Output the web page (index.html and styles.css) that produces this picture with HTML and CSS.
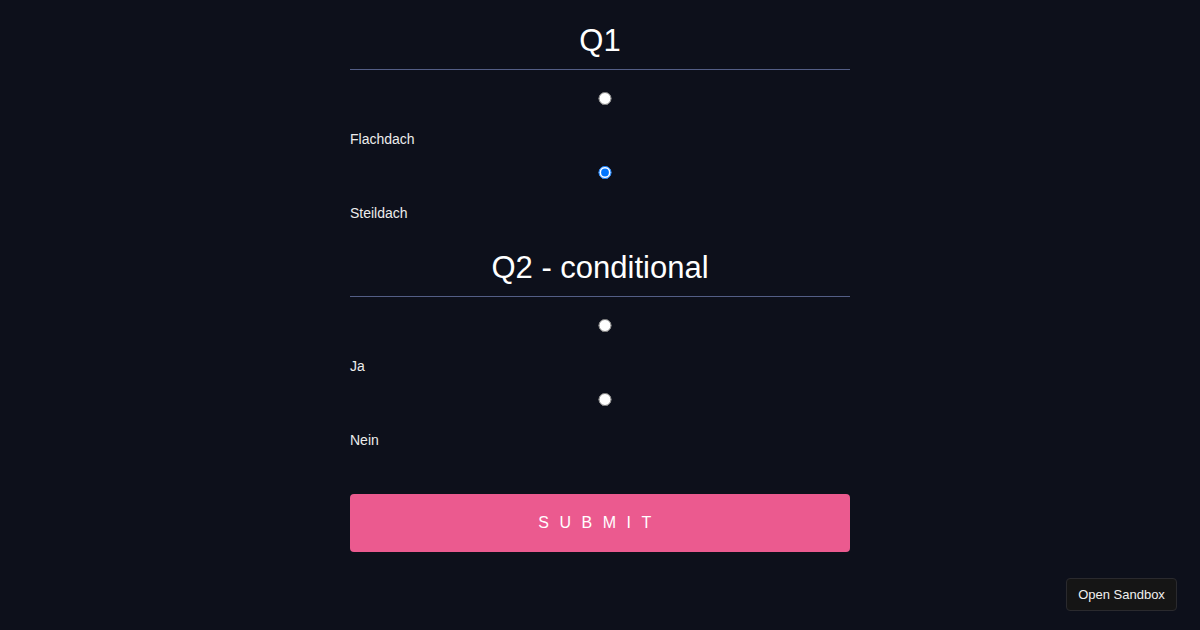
FILE: index.html
```html
<!DOCTYPE html>
<html lang="en">
<head>
    <meta charset="UTF-8">
    <meta name="viewport" content="width=device-width, initial-scale=1.0">
    <title>Survey</title>
    <link rel="stylesheet" href="styles.css">
</head>
<body>
    <form class="survey">
        <div class="question">
            <h2>Q1</h2>
            <div class="options">
                <div class="option">
                    <input type="radio" name="q1" id="q1-flat" value="Flachdach">
                    <label for="q1-flat">Flachdach</label>
                </div>
                <div class="option">
                    <input type="radio" name="q1" id="q1-steep" value="Steildach" checked>
                    <label for="q1-steep">Steildach</label>
                </div>
            </div>
        </div>

        <div class="question">
            <h2>Q2 - conditional</h2>
            <div class="options">
                <div class="option">
                    <input type="radio" name="q2" id="q2-yes" value="Ja">
                    <label for="q2-yes">Ja</label>
                </div>
                <div class="option">
                    <input type="radio" name="q2" id="q2-no" value="Nein">
                    <label for="q2-no">Nein</label>
                </div>
            </div>
        </div>

        <button type="submit" class="submit">Submit</button>
    </form>

    <button type="button" class="sandbox-link">Open Sandbox</button>
</body>
</html>
```

FILE: styles.css
```css
html, body {
    height: 100%;
}
body {
    margin: 0;
    background-color: #0d101b;
    color: #ececec;
    font-family: "Liberation Sans", Arial, sans-serif;
    font-size: 14px;
}
.survey {
    width: 500px;
    margin: 0 auto;
    padding-top: 21px;
}
.question + .question {
    margin-top: 27px;
}
h2 {
    margin: 0;
    padding: 1px 0 10px;
    border-bottom: 1px solid #535e86;
    color: #fff;
    font-size: 31px;
    font-weight: normal;
    line-height: 37px;
    text-align: center;
}
.options {
    padding-top: 3px;
}
.option {
    padding-top: 19px;
}
.option input {
    display: block;
    width: 100%;
    height: 13px;
    margin: 0 3px 0 5px;
}
.option label {
    display: block;
    margin-top: 26px;
    line-height: 16px;
}
.submit {
    display: block;
    width: 100%;
    height: 58px;
    margin-top: 46px;
    padding: 0;
    border: none;
    border-radius: 4px;
    background-color: #eb5a8f;
    color: #fff;
    font-family: "Liberation Sans", Arial, sans-serif;
    font-size: 16px;
    letter-spacing: 10.5px;
    text-transform: uppercase;
    cursor: pointer;
}
.sandbox-link {
    position: fixed;
    right: 23px;
    bottom: 19px;
    width: 111px;
    height: 33px;
    padding: 0;
    border: 1px solid #2a2a2e;
    border-radius: 4px;
    background-color: #151515;
    color: #f0f0f0;
    font-family: "Liberation Sans", Arial, sans-serif;
    font-size: 13px;
    cursor: pointer;
}
```
